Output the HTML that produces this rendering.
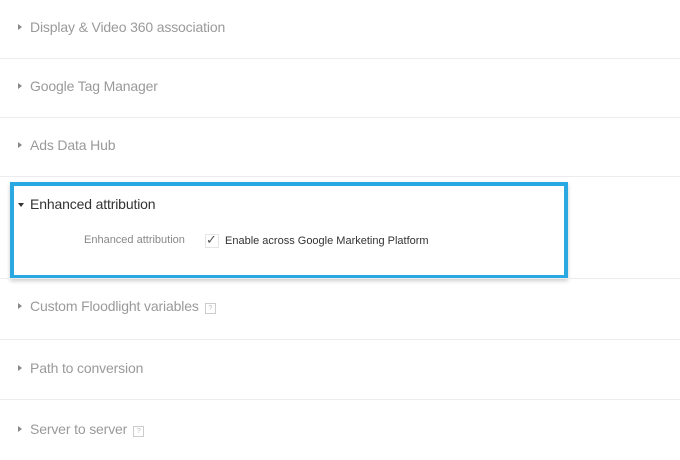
<!DOCTYPE html><html><head><style>
body{margin:0;width:680px;height:460px;background:#fff;font-family:"Liberation Sans",sans-serif;position:relative;overflow:hidden}
.t{position:absolute;left:30px;font-size:14px;letter-spacing:-0.15px;color:#9a9a9a;line-height:16px}
.a{position:absolute;left:18px;width:0;height:0;border-top:3px solid transparent;border-bottom:3px solid transparent;border-left:4px solid #888}
.l{position:absolute;left:0;width:680px;height:1px;background:#ececec}
.q{display:inline-block;width:9px;height:9px;border:1px solid #ccc;font-size:7px;color:#bbb;text-align:center;line-height:9px;margin-left:6px;vertical-align:1px}
</style></head><body>
<div class="a" style="top:24px"></div><div class="t" style="top:19px">Display &amp; Video 360 association</div>
<div class="l" style="top:58px"></div>
<div class="a" style="top:83px"></div><div class="t" style="top:78px">Google Tag Manager</div>
<div class="l" style="top:117px"></div>
<div class="a" style="top:142px"></div><div class="t" style="top:137px">Ads Data Hub</div>
<div class="l" style="top:176px"></div>
<div style="position:absolute;left:10px;top:182px;width:550px;height:89px;border:4px solid #29a8e2;box-shadow:0 2px 4px rgba(0,0,0,.2)"></div>
<div style="position:absolute;left:18px;top:203px;width:0;height:0;border-left:3px solid transparent;border-right:3px solid transparent;border-top:4px solid #333"></div>
<div class="t" style="top:196px;color:#333">Enhanced attribution</div>
<div style="position:absolute;left:84px;top:234px;font-size:11px;color:#888">Enhanced attribution</div>
<div style="position:absolute;left:205px;top:234px;width:12px;height:12px;border:1px solid #e4e4e4"></div>
<div style="position:absolute;left:206px;top:232px;font-size:13px;color:#555">✓</div>
<div style="position:absolute;left:225px;top:235px;font-size:11px;color:#333">Enable across Google Marketing Platform</div>
<div class="l" style="top:278px"></div>
<div class="a" style="top:303px"></div><div class="t" style="top:298px">Custom Floodlight variables<span class="q">?</span></div>
<div class="l" style="top:339px"></div>
<div class="a" style="top:365px"></div><div class="t" style="top:360px">Path to conversion</div>
<div class="l" style="top:399px"></div>
<div class="a" style="top:426px"></div><div class="t" style="top:421px">Server to server<span class="q">?</span></div>
</body></html>
